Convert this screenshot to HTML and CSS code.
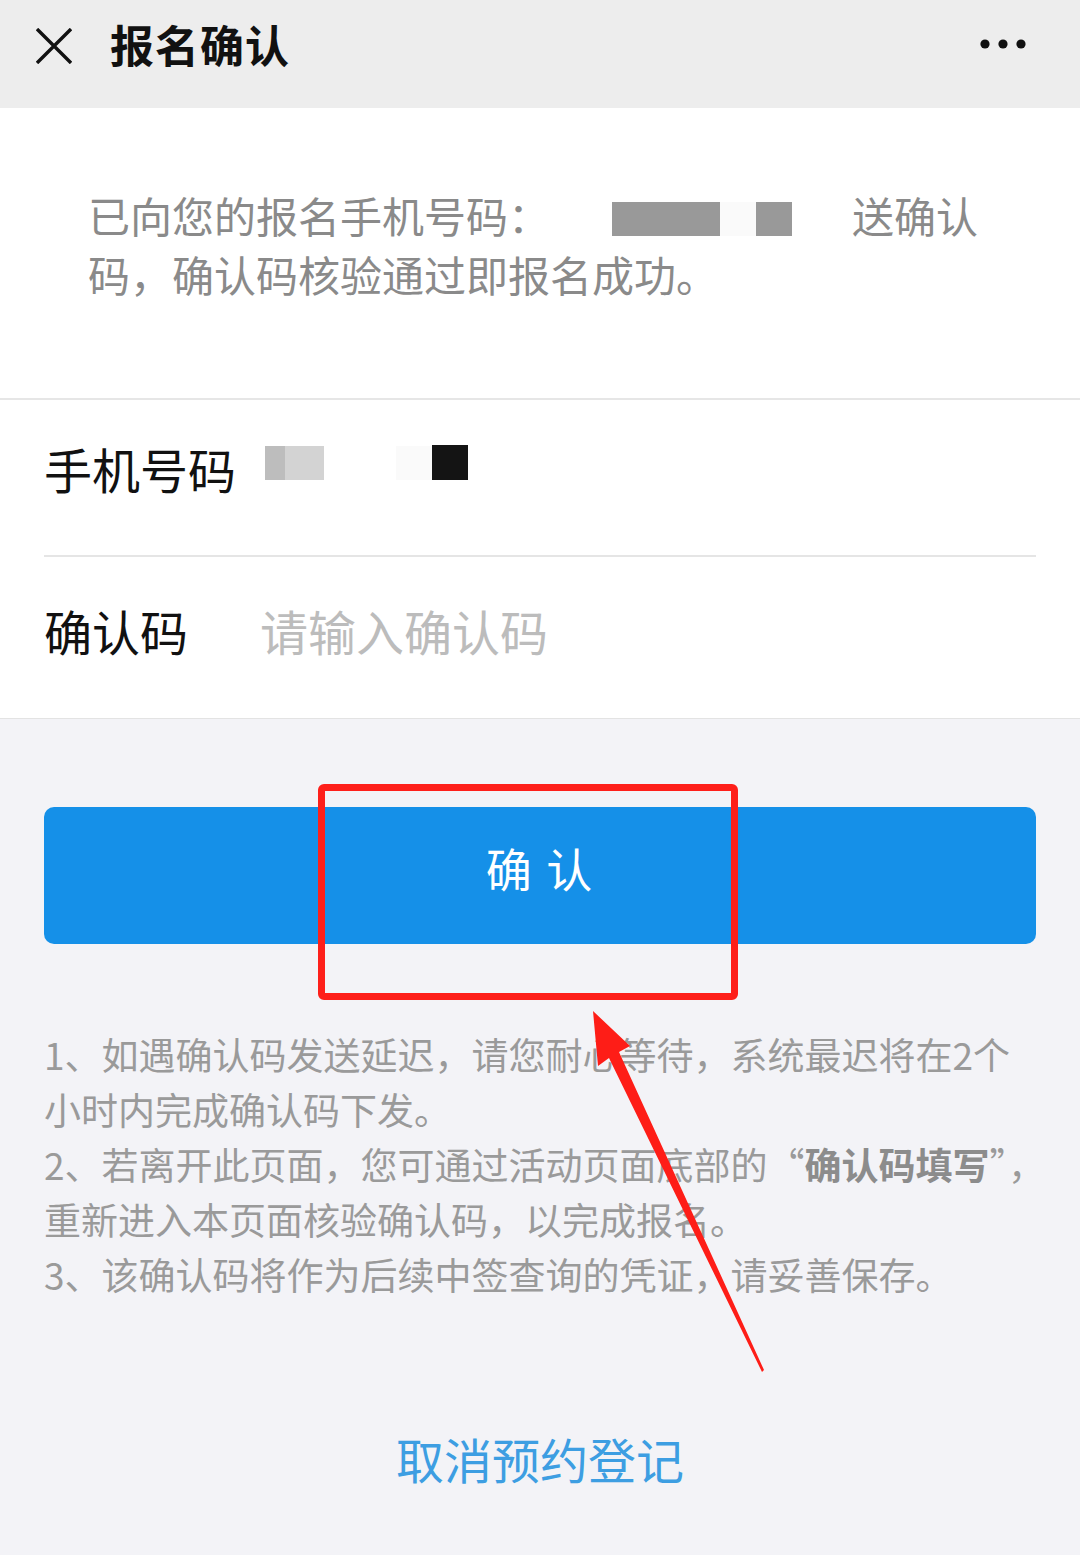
FILE: index.html
```html
<!DOCTYPE html>
<html>
<head>
<meta charset="utf-8">
<title>报名确认</title>
<link rel="stylesheet" href="styles.css">
</head>
<body>
<div class="page">
  <div class="top-bar">
    <svg class="close-icon" width="36" height="36" viewBox="0 0 36 36">
      <path d="M1 1 L35 35 M35 1 L1 35" stroke="#111" stroke-width="3.4" fill="none"/>
    </svg>
    <div class="top-title">报名确认</div>
    <svg class="more-icon" width="48" height="12" viewBox="0 0 48 12">
      <circle cx="5" cy="6" r="4.6" fill="#111"/>
      <circle cx="23" cy="6" r="4.6" fill="#111"/>
      <circle cx="41" cy="6" r="4.6" fill="#111"/>
    </svg>
  </div>

  <div class="intro">
    <p><span>已向您的报名手机号码：</span><span class="mask-gap"></span><span class="mask mask-dark mask-a"></span><span class="mask mask-faint mask-b"></span><span class="mask mask-dark mask-c"></span><span class="mask-gap2"></span><span>送确认</span><br><span>码，确认码核验通过即报名成功。</span></p>
  </div>

  <div class="form">
    <div class="form-row form-row-first">
      <span class="form-label">手机号码</span>
      <span class="mask mask-light mask-d"></span>
      <span class="mask mask-faint mask-e"></span>
      <span class="mask mask-black mask-f"></span>
    </div>
    <div class="form-row form-row-second">
      <span class="form-label">确认码</span>
      <span class="form-input">请输入确认码</span>
    </div>
  </div>

  <div class="actions">
    <button class="confirm-btn">确 认</button>

    <div class="notes">
      1、如遇确认码发送延迟，请您耐心等待，系统最迟将在2个<br>小时内完成确认码下发。<br>
      2、若离开此页面，您可通过活动页面底部的“<b>确认码填写</b>”，<br>重新进入本页面核验确认码，以完成报名。<br>
      3、该确认码将作为后续中签查询的凭证，请妥善保存。
    </div>

    <div class="cancel-link">取消预约登记</div>
  </div>

  <div class="mark-box"></div>
  <svg class="mark-arrow" width="1080" height="1555" viewBox="0 0 1080 1555">
    <polygon points="593,1011 630,1046 619,1052 764,1370 762,1372 609,1058 598,1066" fill="#fe1d17"/>
  </svg>
</div>
</body>
</html>
```

FILE: styles.css
```css
/* styles for the sign-up confirm page */
html, body {
  margin: 0;
  padding: 0;
}

body {
  font-family: "Noto Sans CJK SC", "Noto Sans", sans-serif;
  background-color: #f3f3f7;
  width: 1080px;
  height: 1555px;
  overflow: hidden;
}

.page {
  position: relative;
  min-height: 1555px;
}

.top-bar {
  height: 108px;
  background-color: #ededed;
  display: flex;
  align-items: center;
  padding: 0 52px 0 36px;
  box-sizing: border-box;
}

.close-icon {
  margin-top: -17px;
}

.top-title {
  font-size: 44px;
  font-weight: 700;
  color: #111;
  margin-left: 38px;
  margin-top: -20px;
  letter-spacing: 1px;
}

.more-icon {
  margin-left: auto;
  margin-top: -20px;
}

.intro {
  background-color: #fff;
  padding: 77px 50px 95px 88px;
  border-bottom: 2px solid #e6e6e6;
}

.intro p {
  margin: 0;
  font-size: 42px;
  line-height: 59px;
  color: #8a8a8a;
}

.mask {
  display: inline-block;
  vertical-align: middle;
  height: 34px;
  margin-top: -6px;
}

.mask-gap { display: inline-block; width: 62px; }
.mask-gap2 { display: inline-block; width: 60px; }
.mask-dark { background-color: #999; }
.mask-faint { background-color: #fafafa; }
.mask-light { background-color: #d3d3d3; }
.mask-black { background-color: #141414; }
.mask-a { width: 108px; }
.mask-b { width: 36px; }
.mask-c { width: 36px; }

.form {
  background-color: #fff;
  border-bottom: 1px solid #e3e3e3;
}

.form-row {
  display: flex;
  align-items: center;
  height: 161px;
  margin-left: 44px;
  margin-right: 44px;
  box-sizing: border-box;
}

.form-row-first {
  height: 157px;
  border-bottom: 2px solid #e5e5e5;
}

.form-label {
  font-size: 48px;
  color: #111;
  min-width: 216px;
}

.form-row-first .form-label {
  min-width: 221px;
  margin-top: -20px;
}

.form-row-second {
  padding-bottom: 16px;
}

.form-input {
  font-size: 48px;
  color: #bcbcbc;
}

.mask-d {
  width: 59px;
  margin-top: -30px;
  background: linear-gradient(90deg, #bdbdbd 0 20px, #d3d3d3 20px);
}
.mask-e { width: 36px; margin-left: 72px; margin-top: -30px; }
.mask-f { width: 36px; height: 35px; margin-top: -30px; }

.actions {
  padding: 88px 44px 0 44px;
}

.confirm-btn {
  display: block;
  width: 100%;
  height: 137px;
  border: none;
  border-radius: 10px;
  background-color: #1590e8;
  color: #fff;
  font-family: "Noto Sans CJK SC", "Noto Sans", sans-serif;
  font-size: 46px;
  padding: 0;
  padding-bottom: 18px;
  letter-spacing: 2px;
}

.notes {
  margin-top: 83px;
  font-size: 37px;
  line-height: 55px;
  color: #9a9a9a;
  white-space: nowrap;
}

.notes b {
  color: #8c8c8c;
}

.cancel-link {
  margin-top: 126px;
  text-align: center;
  font-size: 48px;
  line-height: 60px;
  color: #3d9ee2;
}

.mark-box {
  position: absolute;
  left: 318px;
  top: 784px;
  width: 420px;
  height: 216px;
  box-sizing: border-box;
  border: 7px solid #fe1f1a;
  border-radius: 6px;
}

.mark-arrow {
  position: absolute;
  left: 0;
  top: 0;
  pointer-events: none;
}
```
